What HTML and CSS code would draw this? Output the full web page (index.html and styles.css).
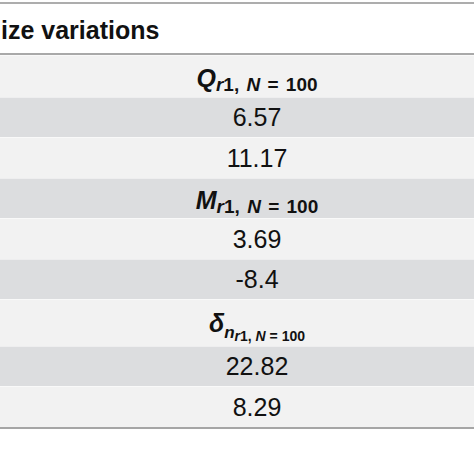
FILE: index.html
```html
<!DOCTYPE html>
<html>
<head>
<meta charset="utf-8">
<link rel="stylesheet" href="styles.css">
</head>
<body>
<div class="page">
  <div class="title">ize variations</div>
  <div class="table">
    <div class="row light head"><div class="lead"></div><div class="val"><span class="sym">Q</span><span class="sub"><i>r</i>1, <i>N</i> = 100</span></div></div>
    <div class="row gray r40"><div class="lead"></div><div class="val">6.57</div></div>
    <div class="row light r41"><div class="lead"></div><div class="val">11.17</div></div>
    <div class="row gray head2"><div class="lead"></div><div class="val"><span class="sym">M</span><span class="sub"><i>r</i>1, <i>N</i> = 100</span></div></div>
    <div class="row light r41"><div class="lead"></div><div class="val">3.69</div></div>
    <div class="row gray r40"><div class="lead"></div><div class="val">-8.4</div></div>
    <div class="row light head3"><div class="lead"></div><div class="val"><span class="sym">δ</span><span class="sub-n"><i>n</i><span class="subsub"><i>r</i>1, <i>N</i> = 100</span></span></div></div>
    <div class="row gray r40"><div class="lead"></div><div class="val">22.82</div></div>
    <div class="row light r41"><div class="lead"></div><div class="val">8.29</div></div>
  </div>
</div>
</body>
</html>
```
FILE: styles.css
```css
html, body {
  margin: 0;
  padding: 0;
  background: #ffffff;
}
.page {
  width: 474px;
  padding-top: 2px;
  font-family: "Liberation Sans", Arial, sans-serif;
  color: #111111;
}
.title {
  border-top: 2px solid #adadad;
  border-bottom: 2px solid #a9a9a9;
  height: 49px;
  line-height: 52px;
  font-size: 25px;
  font-weight: bold;
  padding-left: 1px;
  white-space: nowrap;
  overflow: hidden;
}
.table {
  display: flex;
  flex-direction: column;
  border-bottom: 2px solid #a6a6a6;
}
.row {
  display: flex;
  align-items: center;
  border-top: 1px solid rgba(255,255,255,0.5);
  box-sizing: border-box;
}
.light { background: #f2f2f2; }
.gray { background: #dcdddf; }
.r40 { height: 40px; }
.r41 { height: 41px; }
.head { height: 42px; }
.head2 { height: 40px; }
.head3 { height: 47px; }
.lead {
  width: 40px;
  flex: none;
}
.val {
  flex: 1;
  text-align: center;
  font-size: 25px;
  white-space: nowrap;
}
.head .val, .head2 .val, .head3 .val {
  font-weight: bold;
  padding-top: 4px;
}
.head3 .val {
  padding-top: 0;
}
.sym {
  font-style: italic;
  font-size: 25px;
}
.sub {
  font-size: 19px;
  word-spacing: 2px;
  position: relative;
  top: 4px;
}
.sub-n {
  font-size: 17px;
  font-style: italic;
  position: relative;
  top: 6px;
}
.subsub {
  font-size: 14px;
  font-style: normal;
  position: relative;
  top: 3px;
}
```
